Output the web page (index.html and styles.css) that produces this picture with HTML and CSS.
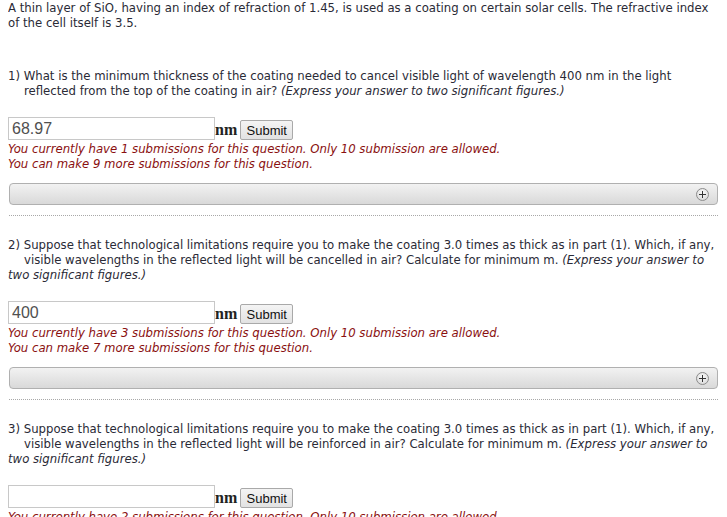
FILE: index.html
```html
<!DOCTYPE html>
<html>
<head>
<meta charset="utf-8">
<link rel="stylesheet" href="styles.css">
</head>
<body>
<div class="intro">
  <div class="line">A thin layer of SiO, having an index of refraction of 1.45, is used as a coating on certain solar cells. The refractive index</div>
  <div class="line">of the cell itself is 3.5.</div>
</div>

<div class="part first">
  <div class="question">
    <div class="line">1) What is the minimum thickness of the coating needed to cancel visible light of wavelength 400 nm in the light</div>
    <div class="line indent">reflected from the top of the coating in air? <i>(Express your answer to two significant figures.)</i></div>
  </div>
  <div class="answer-row">
    <input class="answer" type="text" value="68.97">
    <span class="unit">nm</span>
    <button class="submit">Submit</button>
  </div>
  <div class="msg">
    <div class="line">You currently have 1 submissions for this question. Only 10 submission are allowed.</div>
    <div class="line">You can make 9 more submissions for this question.</div>
  </div>
  <div class="bar"><span class="plus"></span></div>
  <div class="sep"></div>
</div>

<div class="part">
  <div class="question">
    <div class="line">2) Suppose that technological limitations require you to make the coating 3.0 times as thick as in part (1). Which, if any,</div>
    <div class="line indent">visible wavelengths in the reflected light will be cancelled in air? Calculate for minimum m. <i>(Express your answer to</i></div>
    <div class="line"><i>two significant figures.)</i></div>
  </div>
  <div class="answer-row">
    <input class="answer" type="text" value="400">
    <span class="unit">nm</span>
    <button class="submit">Submit</button>
  </div>
  <div class="msg">
    <div class="line">You currently have 3 submissions for this question. Only 10 submission are allowed.</div>
    <div class="line">You can make 7 more submissions for this question.</div>
  </div>
  <div class="bar"><span class="plus"></span></div>
  <div class="sep"></div>
</div>

<div class="part">
  <div class="question">
    <div class="line">3) Suppose that technological limitations require you to make the coating 3.0 times as thick as in part (1). Which, if any,</div>
    <div class="line indent">visible wavelengths in the reflected light will be reinforced in air? Calculate for minimum m. <i>(Express your answer to</i></div>
    <div class="line"><i>two significant figures.)</i></div>
  </div>
  <div class="answer-row">
    <input class="answer" type="text" value="">
    <span class="unit">nm</span>
    <button class="submit">Submit</button>
  </div>
  <div class="msg">
    <div class="line">You currently have 2 submissions for this question. Only 10 submission are allowed.</div>
    <div class="line">You can make 8 more submissions for this question.</div>
  </div>
  <div class="bar"><span class="plus"></span></div>
  <div class="sep"></div>
</div>
</body>
</html>
```

FILE: styles.css
```css
html, body {
  background: #ffffff;
}
body {
  margin: 0 8px;
  font-family: "DejaVu Sans Condensed", "DejaVu Sans", sans-serif;
  font-size: 13px;
  line-height: 15px;
  color: #2a2a36;
}
.line {
  white-space: nowrap;
}
.indent {
  padding-left: 16px;
}
.intro {
  margin-bottom: 38px;
}
.part {
  padding-top: 21px;
}
.part.first {
  padding-top: 0;
}
.question i {
  font-style: italic;
}
.answer-row {
  display: flex;
  align-items: center;
  margin-top: 19px;
  height: 23px;
}
.answer {
  box-sizing: border-box;
  width: 207px;
  height: 23px;
  margin: 0;
  padding: 0 3px;
  border: 1px solid #c8c8c8;
  font-family: "Liberation Sans", Arial, sans-serif;
  font-size: 16px;
  color: #505050;
  background: #fff;
  outline: none;
}
.unit {
  font-family: "Liberation Serif", "Times New Roman", serif;
  font-size: 16px;
  font-weight: 600;
  color: #222;
  padding-top: 2px;
}
.submit {
  box-sizing: border-box;
  margin-left: 3px;
  margin-top: 3px;
  height: 20px;
  width: 53px;
  padding: 0;
  font-family: "Liberation Sans", Arial, sans-serif;
  font-size: 13px;
  color: #111;
  background: linear-gradient(#f4f4f4, #e2e2e2);
  border: 1px solid #a9a9a9;
  border-radius: 2px;
}
.msg {
  color: #8a1010;
  font-style: italic;
  margin-top: 1px;
}
.bar {
  box-sizing: border-box;
  margin: 12px 1px 0 1px;
  height: 22px;
  border: 1px solid #b0b0b0;
  border-radius: 4px;
  background: linear-gradient(#f2f2f2, #d9d9d9);
  display: flex;
  align-items: center;
  justify-content: flex-end;
  padding-right: 8px;
}
.plus {
  position: relative;
  box-sizing: border-box;
  width: 13px;
  height: 13px;
  border-radius: 50%;
  border: 1px solid #8c8c8c;
  background: radial-gradient(circle at 50% 35%, #fafafa, #d4d4d4);
}
.plus::before, .plus::after {
  content: "";
  position: absolute;
  background: #333;
}
.plus::before {
  left: 2px;
  right: 2px;
  top: 5px;
  height: 1px;
}
.plus::after {
  top: 2px;
  bottom: 2px;
  left: 5px;
  width: 1px;
}
.sep {
  margin: 10px 1px 0 1px;
  border-top: 1px dotted #a8a8a8;
}
```
